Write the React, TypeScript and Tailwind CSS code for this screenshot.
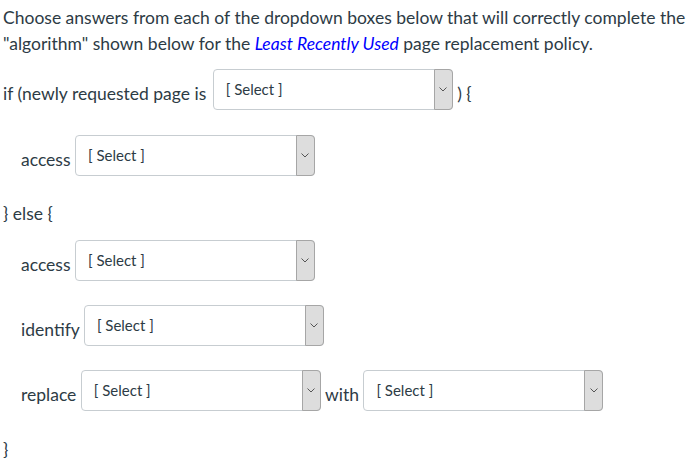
import React from "react";

function Sel() {
  return (
    <div className="flex h-[41px] w-[240px] shrink-0 rounded-[4px] border border-[#c7cdd1] bg-white">
      <div className="flex flex-1 items-center pb-[2px] pl-[12px] text-[15px] leading-[20px] text-[#2d3b45]">
        [ Select ]
      </div>
      <div className="-my-px -mr-px flex w-[19px] items-center justify-center rounded-r-[4px] border border-[#a6a6a6] bg-[#dddddd]">
        <svg width="8" height="5" viewBox="0 0 8 5">
          <path d="M0.5 0.5 L4 4 L7.5 0.5" fill="none" stroke="#555" strokeWidth="1" />
        </svg>
      </div>
    </div>
  );
}

function Label({ children }: { children: React.ReactNode }) {
  return <span className="mb-[4px] whitespace-pre leading-[24px]">{children}</span>;
}

export default function App() {
  return (
    <div
      className="h-[470px] w-[691px] bg-white text-[17.5px] leading-[24px] text-[#2d3b45]"
      style={{ fontFamily: "Lato, 'Open Sans', sans-serif" }}
    >
      <p className="pl-[3px] pr-[2px] pt-[5px] leading-[25.5px]">
        Choose answers from each of the dropdown boxes below that will correctly complete the "algorithm" shown below for the{" "}
        <em className="text-[#0000ff]">Least Recently Used</em> page replacement policy.
      </p>

      <div className="mt-[13px] flex items-end pl-[3px]">
        <Label>if (newly requested page is </Label>
        <span className="w-[2px]" />
        <Sel />
        <Label> ) {"{"}</Label>
      </div>

      <div className="mt-[25px] flex items-end pl-[21px]">
        <Label>access </Label>
        <Sel />
      </div>

      <div className="mt-[26px] pl-[3px]">
        <span className="leading-[24px]">{"}"} else {"{"}</span>
      </div>

      <div className="mt-[14px] flex items-end pl-[21px]">
        <Label>access </Label>
        <Sel />
      </div>

      <div className="mt-[24px] flex items-end pl-[21px]">
        <Label>identify </Label>
        <Sel />
      </div>

      <div className="mt-[24px] flex items-end pl-[21px]">
        <Label>replace </Label>
        <Sel />
        <Label> with </Label>
        <Sel />
      </div>

      <div className="mt-[27px] pl-[3px]">
        <span className="leading-[24px]">{"}"}</span>
      </div>
    </div>
  );
}
